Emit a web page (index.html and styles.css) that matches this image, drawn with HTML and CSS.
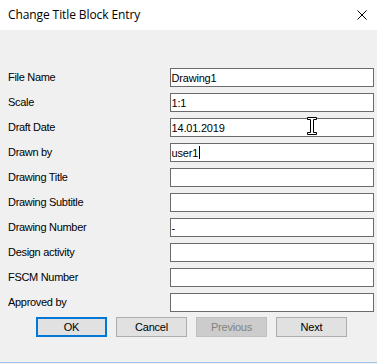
FILE: index.html
```html
<!DOCTYPE html>
<html lang="en">
<head>
    <meta charset="UTF-8">
    <meta name="viewport" content="width=device-width, initial-scale=1.0">
    <title>Change Title Block Entry</title>
    <link rel="stylesheet" href="styles.css">
</head>
<body>
    <div class="window">
        <div class="titlebar">
            <span class="title">Change Title Block Entry</span>
            <svg class="close" width="10" height="10" viewBox="0 0 10 10">
                <path d="M0.5 0.5 L9.5 9.5 M9.5 0.5 L0.5 9.5" stroke="#000" stroke-width="1" fill="none"/>
            </svg>
        </div>

        <div class="form">
            <div class="row"><label>File Name</label><div class="field">Drawing1</div></div>
            <div class="row"><label>Scale</label><div class="field">1:1</div></div>
            <div class="row">
                <label>Draft Date</label>
                <div class="field">14.01.2019
                    <svg class="ibeam" width="10" height="18" viewBox="0 0 10 18">
                        <path d="M0.5 0.5 H9.5 V2.5 H6.5 V15.5 H9.5 V17.5 H0.5 V15.5 H3.5 V2.5 H0.5 Z" fill="#fff" stroke="#000" stroke-width="1"/>
                    </svg>
                </div>
            </div>
            <div class="row"><label>Drawn by</label><div class="field">user1<span class="caret"></span></div></div>
            <div class="row"><label>Drawing Title</label><div class="field"></div></div>
            <div class="row"><label>Drawing Subtitle</label><div class="field"></div></div>
            <div class="row"><label>Drawing Number</label><div class="field">-</div></div>
            <div class="row"><label>Design activity</label><div class="field"></div></div>
            <div class="row"><label>FSCM Number</label><div class="field"></div></div>
            <div class="row"><label>Approved by</label><div class="field"></div></div>
        </div>

        <div class="buttons">
            <button class="btn default">OK</button>
            <button class="btn">Cancel</button>
            <button class="btn" disabled>Previous</button>
            <button class="btn">Next</button>
        </div>

        <div class="edge"></div>
    </div>
</body>
</html>
```

FILE: styles.css
```css
body {
    margin: 0;
    font-family: 'Liberation Sans', Arial, sans-serif;
    font-size: 11px;
    color: #000;
    background: #f0f0f0;
}
.window {
    width: 377px;
    height: 364px;
    display: flex;
    flex-direction: column;
    background: #f0f0f0;
}
.titlebar {
    height: 30px;
    background: #fff;
    display: flex;
    align-items: center;
    justify-content: space-between;
    padding: 0 7px 0 8px;
    box-sizing: border-box;
}
.title {
    font-family: 'Open Sans', 'Noto Sans', sans-serif;
    font-size: 12px;
    letter-spacing: -0.1px;
    margin-top: -1px;
}
.close {
    display: block;
    margin-top: -1px;
    margin-right: 3px;
}
.form {
    display: flex;
    flex-direction: column;
    gap: 6px;
    padding: 38px 3px 0 8px;
}
.row {
    display: flex;
    align-items: center;
    height: 19px;
}
.row label {
    width: 162px;
    letter-spacing: -0.3px;
    margin-top: -2px;
}
.field {
    position: relative;
    width: 205px;
    height: 19px;
    box-sizing: border-box;
    border: 1px solid #6b6b6b;
    background: #fff;
    padding: 1px 1px 0 1px;
    line-height: 16px;
    letter-spacing: -0.2px;
}
.caret {
    display: inline-block;
    width: 1px;
    height: 13px;
    background: #000;
    vertical-align: -2px;
    margin-left: 1px;
}
.ibeam {
    position: absolute;
    left: 136px;
    top: -2px;
}
.buttons {
    display: flex;
    gap: 9px;
    padding: 5px 0 0 36px;
}
.btn {
    width: 71px;
    height: 20px;
    box-sizing: border-box;
    background: #e1e1e1;
    border: 1px solid #adadad;
    font-family: 'Liberation Sans', Arial, sans-serif;
    font-size: 11px;
    letter-spacing: -0.2px;
    color: #000;
    padding: 0;
}
.btn.default {
    border: 2px solid #0078d7;
}
.btn:disabled {
    background: #cccccc;
    border-color: #bfbfbf;
    color: #838383;
}
.edge {
    margin-top: auto;
    margin-bottom: 1px;
    height: 1px;
    background: #9dc8ec;
}
```
